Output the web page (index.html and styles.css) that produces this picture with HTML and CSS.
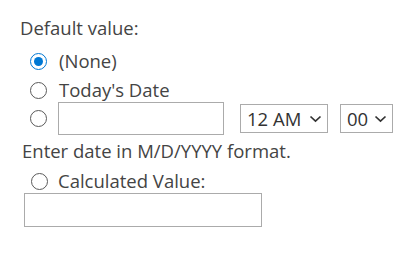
FILE: index.html
```html
<!DOCTYPE html>
<html>
<head>
<meta charset="utf-8">
<link rel="stylesheet" href="styles.css">
</head>
<body>
<div class="wrap">
  <div class="label">Default value:</div>
  <div class="options">
    <div class="row row-text">
      <span class="radio checked"></span>
      <span class="opt">(None)</span>
    </div>
    <div class="row row-text">
      <span class="radio"></span>
      <span class="opt">Today's Date</span>
    </div>
    <div class="row row-date">
      <span class="radio"></span>
      <span class="textbox date"></span>
      <span class="select hour">12 AM<svg class="chev" width="13" height="8" viewBox="0 0 13 8"><path d="M1.5 1.5 L6.5 6.2 L11.5 1.5" fill="none" stroke="#333" stroke-width="1.7"/></svg></span>
      <span class="select minute">00<svg class="chev" width="13" height="8" viewBox="0 0 13 8"><path d="M1.5 1.5 L6.5 6.2 L11.5 1.5" fill="none" stroke="#333" stroke-width="1.7"/></svg></span>
    </div>
  </div>
  <div class="hint">Enter date in M/D/YYYY format.</div>
  <div class="row row-text calc">
    <span class="radio"></span>
    <span class="opt">Calculated Value:</span>
  </div>
  <span class="textbox formula"></span>
</div>
</body>
</html>
```
FILE: styles.css
```css
html, body {
  margin: 0;
  padding: 0;
  background: #fff;
  overflow: hidden;
}
body {
  font-family: "Open Sans", "Noto Sans", sans-serif;
  font-size: 18.5px;
  color: #444;
}
.wrap {
  padding: 14px 0 0 20px;
  display: flex;
  flex-direction: column;
  align-items: flex-start;
}
.label {
  line-height: 28px;
  height: 28px;
}
.options {
  margin-top: 7px;
  margin-left: 10px;
  display: flex;
  flex-direction: column;
}
.row {
  display: flex;
  align-items: center;
}
.row-text {
  height: 24px;
  line-height: 24px;
}
.row-text + .row-text {
  margin-top: 5px;
}
.row-date {
  height: 33px;
}
.radio {
  box-sizing: border-box;
  width: 17px;
  height: 17px;
  border: 1px solid #5a5a5a;
  border-radius: 50%;
  background: #fff;
  flex: none;
  position: relative;
}
.radio.checked {
  border-color: #0078d4;
}
.radio.checked::after {
  content: "";
  position: absolute;
  left: 3px;
  top: 3px;
  width: 9px;
  height: 9px;
  border-radius: 50%;
  background: #0078d4;
}
.opt {
  margin-left: 12px;
}
.textbox {
  display: block;
  box-sizing: border-box;
  border: 1px solid #ababab;
  background: #fff;
}
.date {
  width: 166px;
  height: 33px;
  margin-left: 11px;
}
.select {
  box-sizing: border-box;
  height: 29px;
  border: 1px solid #ababab;
  display: flex;
  align-items: center;
  justify-content: space-between;
  padding: 0 5px 0 6px;
  color: #333;
}
.hour {
  width: 88px;
  margin-left: 16px;
}
.minute {
  width: 53px;
  margin-left: 12px;
}
.chev {
  display: block;
}
.hint {
  margin-top: 4px;
  margin-left: 2px;
  line-height: 24px;
  height: 24px;
}
.calc {
  margin-top: 6px;
  margin-left: 11px;
}
.calc .opt {
  margin-left: 10px;
}
.formula {
  margin-left: 4px;
  width: 238px;
  height: 34px;
}
```
